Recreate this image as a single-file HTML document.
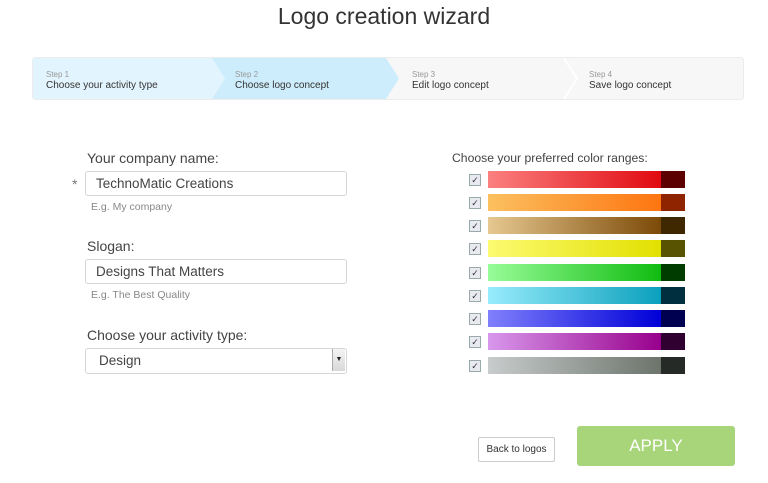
<!DOCTYPE html><html><head><style>
body{margin:0;width:768px;height:483px;background:#fff;font-family:"Liberation Sans",sans-serif;position:relative;overflow:hidden}
.a{position:absolute}
.lbl{font-size:14px;color:#444}
.in{position:absolute;left:85px;width:259px;height:23px;border:1px solid #d6d6d6;border-radius:3px;font-size:13.5px;color:#444;line-height:23px;box-sizing:content-box}
.hint{font-size:10.5px;color:#888}
.cb{position:absolute;left:469px;width:10px;height:10px;border:1px solid #9aa;background:#e8eaf0;font-size:9px;line-height:10px;text-align:center;color:#334}
.bar{position:absolute;left:488px;width:173px;height:17px}
.dk{position:absolute;left:661px;width:24px;height:17px}
</style></head><body>
<div class="a" style="left:0;width:768px;top:3px;text-align:center;font-size:23px;color:#333">Logo creation wizard</div>
<svg class="a" style="left:32px;top:57px" width="712" height="43">
<rect x="0.5" y="0.5" width="711" height="42" rx="3" fill="#f7f7f7" stroke="#ececec"/>
<path d="M1,1 H180 L193,21.5 L180,42 H1Z" fill="#e2f4fd"/>
<path d="M180,1 H354 L367,21.5 L354,42 H180 L193,21.5Z" fill="#cdedfc"/>
<path d="M532,1 L545,21.5 L532,42" fill="none" stroke="#fff" stroke-width="2"/>
<text x="14" y="20" font-size="8" fill="#999">Step 1</text><text x="14" y="31" font-size="10" fill="#333">Choose your activity type</text>
<text x="203" y="20" font-size="8" fill="#999">Step 2</text><text x="203" y="31" font-size="10" fill="#333">Choose logo concept</text>
<text x="380" y="20" font-size="8" fill="#999">Step 3</text><text x="380" y="31" font-size="10" fill="#333">Edit logo concept</text>
<text x="557" y="20" font-size="8" fill="#999">Step 4</text><text x="557" y="31" font-size="10" fill="#333">Save logo concept</text>
</svg>
<div class="a lbl" style="left:87px;top:150px">Your company name:</div>
<div class="a" style="left:72px;top:176px;color:#777;font-size:14px">*</div>
<div class="in" style="top:171px;padding-left:10px;width:250px">TechnoMatic Creations</div>
<div class="a hint" style="left:91px;top:201px">E.g. My company</div>
<div class="a lbl" style="left:87px;top:238px">Slogan:</div>
<div class="in" style="top:259px;padding-left:10px;width:250px">Designs That Matters</div>
<div class="a hint" style="left:91px;top:289px">E.g. The Best Quality</div>
<div class="a lbl" style="left:87px;top:327px">Choose your activity type:</div>
<div class="in" style="top:348px;height:24px;padding-left:13px;width:247px">Design</div>
<div class="a" style="left:332px;top:349px;width:12px;height:22px;background:linear-gradient(#f4f4f4,#d8d8d8);border-left:1px solid #aaa;font-size:7px;text-align:center;line-height:22px;color:#222">▼</div>
<div class="a" style="left:452px;top:151px;font-size:12.2px;color:#444">Choose your preferred color ranges:</div>
<div class="cb" style="top:174px">✓</div><div class="bar" style="top:171px;background:linear-gradient(90deg,#fb8080,#e00a10)"></div><div class="dk" style="top:171px;background:#5c0002"></div>
<div class="cb" style="top:197px">✓</div><div class="bar" style="top:194px;background:linear-gradient(90deg,#fcc060,#fd7510)"></div><div class="dk" style="top:194px;background:#8f2500"></div>
<div class="cb" style="top:220px">✓</div><div class="bar" style="top:217px;background:linear-gradient(90deg,#e6c890,#7c4a08)"></div><div class="dk" style="top:217px;background:#3f2800"></div>
<div class="cb" style="top:243px">✓</div><div class="bar" style="top:240px;background:linear-gradient(90deg,#fcfa70,#e2e000)"></div><div class="dk" style="top:240px;background:#575300"></div>
<div class="cb" style="top:267px">✓</div><div class="bar" style="top:264px;background:linear-gradient(90deg,#98fc98,#10bc10)"></div><div class="dk" style="top:264px;background:#003c00"></div>
<div class="cb" style="top:290px">✓</div><div class="bar" style="top:287px;background:linear-gradient(90deg,#98ecfc,#0aa0bc)"></div><div class="dk" style="top:287px;background:#003040"></div>
<div class="cb" style="top:313px">✓</div><div class="bar" style="top:310px;background:linear-gradient(90deg,#8080fc,#0000d8)"></div><div class="dk" style="top:310px;background:#000050"></div>
<div class="cb" style="top:336px">✓</div><div class="bar" style="top:333px;background:linear-gradient(90deg,#d898ec,#98008c)"></div><div class="dk" style="top:333px;background:#300030"></div>
<div class="cb" style="top:360px">✓</div><div class="bar" style="top:357px;background:linear-gradient(90deg,#c8cccc,#6c746c)"></div><div class="dk" style="top:357px;background:#262a26"></div>
<div class="a" style="left:478px;top:437px;width:75px;height:23px;border:1px solid #ccc;border-radius:2px;font-size:10px;color:#333;text-align:center;line-height:23px">Back to logos</div>
<div class="a" style="left:577px;top:426px;width:158px;height:40px;background:#a8d47a;border-radius:3px;font-size:17px;color:#fff;text-align:center;line-height:40px">APPLY</div>
</body></html>
